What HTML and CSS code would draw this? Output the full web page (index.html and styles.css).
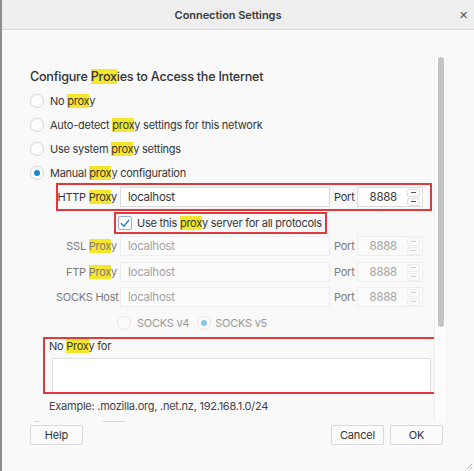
FILE: index.html
```html
<!DOCTYPE html>
<html>
<head>
<meta charset="utf-8">
<title>Connection Settings</title>
<link rel="stylesheet" href="styles.css">
</head>
<body>
<div class="window">
  <div class="titlebar">
    <span class="title">Connection Settings</span>
    <span class="close">✕</span>
  </div>
  <div class="main">
    <div class="content">
      <h1 class="heading">Configure <mark>Prox</mark>ies to Access the Internet</h1>
      <div class="radio-row"><span class="radio"></span><span class="rtext">No <mark>prox</mark>y</span></div>
      <div class="radio-row"><span class="radio"></span><span class="rtext">Auto-detect <mark>prox</mark>y settings for this network</span></div>
      <div class="radio-row"><span class="radio"></span><span class="rtext">Use system <mark>prox</mark>y settings</span></div>
      <div class="radio-row"><span class="radio checked"></span><span class="rtext">Manual <mark>prox</mark>y configuration</span></div>

      <div class="proxy-row outlined">
        <span class="plabel">HTTP <mark>Prox</mark>y</span>
        <div class="field">localhost</div>
        <span class="port-label">Port</span>
        <div class="port"><span class="port-val">8888</span><span class="spinner"><span class="spin-btn"><i></i></span><span class="spin-btn"><i></i></span></span></div>
      </div>

      <div class="check-row outlined">
        <span class="checkbox"><svg width="10" height="9" viewBox="0 0 10 9"><path d="M1.2 4.6 L3.8 7.2 L8.8 1.2" fill="none" stroke="#2a7fd4" stroke-width="1.4" stroke-linecap="round" stroke-linejoin="round"/></svg></span>
        <span class="ctext">Use this <mark>prox</mark>y server for all protocols</span>
      </div>

      <div class="proxy-row disabled r-ssl">
        <span class="plabel">SSL <mark>Prox</mark>y</span>
        <div class="field">localhost</div>
        <span class="port-label">Port</span>
        <div class="port"><span class="port-val">8888</span><span class="spinner"><span class="spin-btn"><i></i></span><span class="spin-btn"><i></i></span></span></div>
      </div>
      <div class="proxy-row disabled r-ftp">
        <span class="plabel">FTP <mark>Prox</mark>y</span>
        <div class="field">localhost</div>
        <span class="port-label">Port</span>
        <div class="port"><span class="port-val">8888</span><span class="spinner"><span class="spin-btn"><i></i></span><span class="spin-btn"><i></i></span></span></div>
      </div>
      <div class="proxy-row disabled r-socks">
        <span class="plabel">SOCKS Host</span>
        <div class="field">localhost</div>
        <span class="port-label">Port</span>
        <div class="port"><span class="port-val">8888</span><span class="spinner"><span class="spin-btn"><i></i></span><span class="spin-btn"><i></i></span></span></div>
      </div>

      <div class="socks-row">
        <span class="radio disabled"></span><span class="stext">SOCKS v4</span>
        <span class="radio disabled checked v5"></span><span class="stext">SOCKS v5</span>
      </div>

      <div class="noproxy">
        <div class="np-label">No <mark>Prox</mark>y for</div>
        <div class="textarea"></div>
      </div>
      <div class="example">Example: .mozilla.org, .net.nz, 192.168.1.0/24</div>
      <div class="radio-row last"><span class="radio"></span><span class="rtext">Automatic <mark>prox</mark>y configuration URL</span></div>
    </div>
    <div class="scrollbar"><div class="thumb"></div></div>
  </div>
  <div class="footer">
    <button class="btn">Help</button>
    <span class="spacer"></span>
    <button class="btn">Cancel</button>
    <button class="btn">OK</button>
  </div>
  <svg class="grip" width="8" height="8" viewBox="0 0 8 8"><path d="M7 2 L2 7 M7 5 L5 7" stroke="#b5b5b5" stroke-width="1"/></svg>
</div>
</body>
</html>
```

FILE: styles.css
```css
* { box-sizing: border-box; }
html, body { margin: 0; padding: 0; }
body {
  width: 474px;
  height: 471px;
  overflow: hidden;
  font-family: Inter, "Noto Sans", sans-serif;
  font-size: 11px;
  letter-spacing: -0.25px;
  color: #363636;
  background: #f9f9f9;
}
.window {
  position: relative;
  width: 474px;
  height: 471px;
  border-left: 2px solid #8e8e8e;
  background: #f9f9f9;
  display: flex;
  flex-direction: column;
}
.titlebar {
  height: 30px;
  flex: none;
  background: #eeeeee;
  border-bottom: 1px solid #d8d8d8;
  display: flex;
  align-items: center;
  justify-content: center;
  position: relative;
}
.title {
  font-weight: 600;
  font-size: 11px;
  color: #3a3a3a;
  margin-left: -20px;
  letter-spacing: -0.05px;
}
.close {
  position: absolute;
  right: 6px;
  top: 8px;
  font-size: 11px;
  color: #555;
}
mark {
  background: #f6e62b;
  color: inherit;
}
.main {
  flex: none;
  height: 365px;
  margin-top: 27px;
  display: flex;
}
.content {
  flex: 1;
  overflow: hidden;
  padding: 8px 0 0 28px;
}
.heading {
  margin: 0;
  height: 24px;
  line-height: 24px;
  font-size: 12.6px;
  font-weight: 500;
  color: #333;
  letter-spacing: -0.25px;
}
.radio-row {
  height: 24px;
  display: flex;
  align-items: center;
}
.radio-row.last { margin-top: 2px; }
.radio {
  flex: none;
  width: 14px;
  height: 14px;
  border-radius: 50%;
  background: #fff;
  border: 1px solid #d5d5d5;
  display: inline-flex;
  align-items: center;
  justify-content: center;
}
.radio.checked::after {
  content: "";
  width: 6px;
  height: 6px;
  border-radius: 50%;
  background: #1a87d7;
}
.radio.disabled {
  border-color: #e6e6e6;
  background: #fbfbfb;
}
.radio.disabled.checked::after {
  background: #8cc3ea;
}
.rtext { margin-left: 6px; white-space: nowrap; }

.proxy-row {
  width: 368px;
  height: 20px;
  margin-left: 30px;
  display: flex;
  align-items: center;
}
.outlined {
  outline: 2px solid #e0393c;
  outline-offset: 2px;
}
.proxy-row.outlined { margin-top: 2px; }
.plabel {
  width: 61px;
  margin-left: -4px;
  margin-right: 3px;
  text-align: right;
  white-space: nowrap;
}
.field {
  width: 210px;
  height: 20px;
  background: #fff;
  border: 1px solid #dcdcdc;
  padding-left: 7px;
  line-height: 18px;
  font-size: 11.5px;
}
.port-label {
  width: 23px;
  margin-left: 4px;
}
.port {
  width: 66px;
  height: 20px;
  background: #fff;
  border: 1px solid #dcdcdc;
  display: flex;
  align-items: center;
  font-size: 11.5px;
}
.port-val {
  flex: 1;
  text-align: right;
}
.spinner {
  width: 13px;
  margin: 0 2px 0 10px;
  display: flex;
  flex-direction: column;
  gap: 1px;
}
.spin-btn {
  height: 8px;
  border: 1px solid #dedede;
  border-radius: 2px;
  background: #fafafa;
  display: flex;
  align-items: center;
  justify-content: center;
}
.spin-btn i {
  width: 5px;
  height: 1px;
  background: #555;
}
.disabled { color: #7b7b7b; }
.disabled .field,
.disabled .port {
  background: #fbfbfb;
  border-color: #ededed;
  color: #a3a3a3;
}
.disabled .spin-btn { border-color: #eeeeee; }
.disabled .spin-btn i { background: #cfcfcf; }

.check-row {
  width: 205px;
  height: 14px;
  margin: 9px 0 0 88px;
  display: flex;
  align-items: center;
}
.checkbox {
  flex: none;
  width: 14px;
  height: 14px;
  border: 1px solid #94b3d3;
  border-radius: 2px;
  background: #fff;
  display: flex;
  align-items: center;
  justify-content: center;
}
.ctext { margin-left: 5px; white-space: nowrap; }
.r-ssl { margin-top: 6px; }
.r-ftp { margin-top: 6px; }
.r-socks { margin-top: 5px; }

.socks-row {
  height: 14px;
  margin: 9px 0 0 87px;
  display: flex;
  align-items: center;
  color: #9a9a9a;
}
.stext { margin-left: 6px; }
.radio.v5 { margin-left: 8px; }
.socks-row .stext:last-child { margin-left: 4px; }

.noproxy {
  width: 393px;
  height: 57px;
  margin: 7px 0 0 13px;
  border: 2px solid #e0393c;
  overflow: hidden;
}
.np-label {
  height: 14px;
  line-height: 14px;
  padding-left: 4px;
}
.textarea {
  width: 379px;
  height: 40px;
  margin: 5px 0 0 7px;
  background: #fff;
  border: 1px solid #dedede;
}
.example {
  margin-top: 4px;
  line-height: 16px;
  padding-left: 19px;
  color: #444;
}

.scrollbar {
  flex: none;
  width: 13px;
  margin-right: 27px;
  background: #fcfcfc;
  border-left: 1px solid #eeeeee;
  border-right: 1px solid #f3f3f3;
}
.thumb {
  width: 6px;
  height: 270px;
  margin-left: 3px;
  border-radius: 3px;
  background: #c3c3c3;
}

.footer {
  flex: none;
  display: flex;
  padding: 3px 31px 0 28px;
  gap: 6px;
}
.spacer { flex: 1; }
.btn {
  width: 53px;
  height: 20px;
  padding: 0;
  background: #fbfbfb;
  border: 1px solid #d9d9d9;
  border-radius: 2px;
  font-family: Inter, "Noto Sans", sans-serif;
  font-size: 11px;
  letter-spacing: -0.15px;
  color: #333;
}
.grip {
  position: absolute;
  right: 1px;
  bottom: 1px;
}
```
